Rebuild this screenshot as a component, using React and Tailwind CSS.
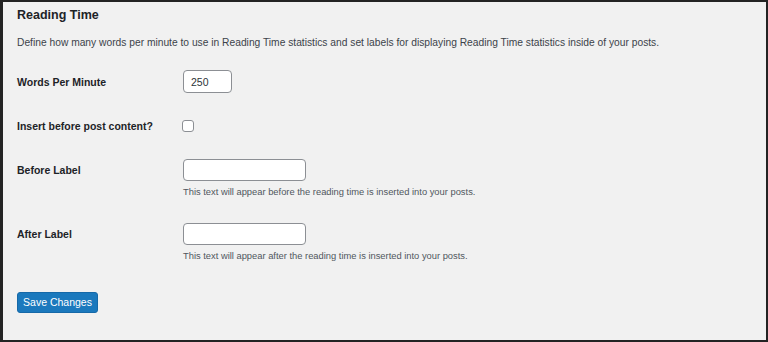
import React from 'react'

const fields = [
  { label: 'Before Label', help: 'This text will appear before the reading time is inserted into your posts.' },
  { label: 'After Label', help: 'This text will appear after the reading time is inserted into your posts.' }
]

export default function App() {
  return (
    <div className="w-[768px] h-[342px] bg-[#f1f1f1] border-t-2 border-b-2 border-l-[3px] border-r-2 border-[#232323] pl-[14px] pt-[5px] font-['Liberation_Sans',Arial,sans-serif] text-[#1d2327] overflow-hidden">
      <h2 className="text-[12.5px] leading-[16px] font-semibold">Reading Time</h2>
      <p className="mt-[13px] text-[10.25px] leading-[14px] text-[#3c434a]">
        Define how many words per minute to use in Reading Time statistics and set labels for displaying Reading Time statistics inside of your posts.
      </p>

      <div className="mt-[20px] flex items-center">
        <label className="w-[166px] text-[10.5px] leading-[12px] font-bold">Words Per Minute</label>
        <input
          defaultValue="250"
          className="w-[49px] h-[23px] bg-white border border-[#8c8f94] rounded-[4px] px-[7px] text-[10.5px] text-[#2c3338] outline-none"
        />
      </div>

      <div className="mt-[27px] flex items-center h-[12px]">
        <label className="w-[165px] text-[10.5px] leading-[12px] font-bold">Insert before post content?</label>
        <input type="checkbox" className="appearance-none w-[12px] h-[12px] bg-white border border-[#8c8f94] rounded-[3px]" />
      </div>

      {fields.map(({ label, help }, i) => (
        <div key={label} className={i === 0 ? 'mt-[27px]' : 'mt-[25px]'}>
          <div className="flex items-center">
            <label className="w-[166px] text-[10.5px] leading-[12px] font-bold">{label}</label>
            <input className="w-[123px] h-[22px] bg-white border border-[#8c8f94] rounded-[4px] outline-none" />
          </div>
          <p className="mt-[5px] ml-[166px] text-[9.35px] leading-[12px] text-[#50575e]">{help}</p>
        </div>
      ))}

      <button className="mt-[30px] h-[21px] w-[81px] bg-[#1b79bd] border border-[#1669a8] rounded-[3px] text-white text-[10.5px] leading-none">
        Save Changes
      </button>
    </div>
  )
}
